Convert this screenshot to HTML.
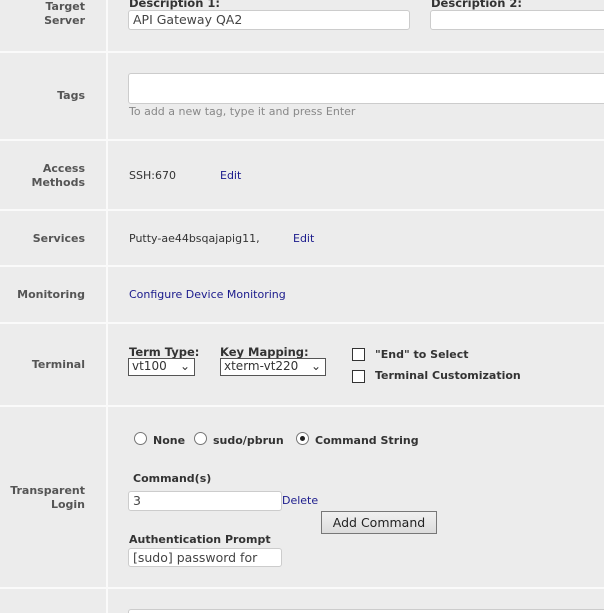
<!DOCTYPE html><html><head><style>
html,body{overflow:hidden}
body{margin:0;width:604px;height:613px;background:#ececec;position:relative;font-family:"DejaVu Sans","Liberation Sans",sans-serif;font-size:11px;color:#333}
.a{position:absolute;white-space:nowrap}
.h{position:absolute;left:0;width:604px;height:2px;background:#fafafa}
.v{position:absolute;left:106px;top:0;width:2px;height:613px;background:#fafafa}
.l{position:absolute;right:519px;text-align:right;font-weight:bold;color:#555;font-size:11px;line-height:14px}
.b{font-weight:bold;color:#333}
.lk{color:#1a1a8c}
.in{position:absolute;background:#fff;border:1px solid #ccc;border-radius:3px;box-sizing:border-box;font-size:12.5px;color:#444;padding-left:4px;font-family:"DejaVu Sans",sans-serif}
.sel{position:absolute;background:#fff;border:1px solid #555;box-sizing:border-box;font-size:12px;padding-left:3px;line-height:15px}
.cb{position:absolute;width:11px;height:11px;border:1px solid #333;background:#fff}
.rd{position:absolute;width:11px;height:11px;border:1px solid #777;border-radius:50%;background:#fff}
</style></head><body>
<div class="v"></div>
<div class="h" style="top:51px"></div><div class="h" style="top:139px"></div><div class="h" style="top:209px"></div><div class="h" style="top:265px"></div><div class="h" style="top:322px"></div><div class="h" style="top:405px"></div><div class="h" style="top:587px"></div>

<div class="l" style="top:0">Target<br>Server</div>
<div class="a b" style="left:129px;top:-4px;font-size:11.5px">Description 1:</div>
<div class="a b" style="left:431px;top:-4px;font-size:11.5px">Description 2:</div>
<div class="in" style="left:128px;top:10px;width:282px;height:20px;line-height:18px">API Gateway QA2</div>
<div class="in" style="left:430px;top:10px;width:190px;height:20px"></div>

<div class="l" style="top:89px">Tags</div>
<div class="in" style="left:128px;top:73px;width:490px;height:31px"></div>
<div class="a" style="left:129px;top:105px;color:#888">To add a new tag, type it and press Enter</div>

<div class="l" style="top:162px">Access<br>Methods</div>
<div class="a" style="left:129px;top:169px">SSH:670</div>
<div class="a lk" style="left:220px;top:169px">Edit</div>

<div class="l" style="top:232px">Services</div>
<div class="a" style="left:129px;top:232px">Putty-ae44bsqajapig11,</div>
<div class="a lk" style="left:293px;top:232px">Edit</div>

<div class="l" style="top:288px">Monitoring</div>
<div class="a lk" style="left:129px;top:288px">Configure Device Monitoring</div>

<div class="l" style="top:358px">Terminal</div>
<div class="a b" style="left:129px;top:345px;font-size:11.5px">Term Type:</div>
<div class="a b" style="left:220px;top:345px;font-size:11.5px">Key Mapping:</div>
<div class="sel" style="left:128px;top:358px;width:67px;height:18px">vt100<span style="position:absolute;right:4px;top:0">&#8964;</span></div>
<div class="sel" style="left:220px;top:358px;width:106px;height:18px">xterm-vt220<span style="position:absolute;right:4px;top:0">&#8964;</span></div>
<div class="cb" style="left:352px;top:348px"></div>
<div class="cb" style="left:352px;top:370px"></div>
<div class="a b" style="left:375px;top:348px">"End" to Select</div>
<div class="a b" style="left:375px;top:369px">Terminal Customization</div>

<div class="l" style="top:484px">Transparent<br>Login</div>
<div class="rd" style="left:134px;top:432px"></div>
<div class="a b" style="left:153px;top:434px">None</div>
<div class="rd" style="left:194px;top:432px"></div>
<div class="a b" style="left:213px;top:434px">sudo/pbrun</div>
<div class="rd" style="left:296px;top:432px"><div style="width:5px;height:5px;border-radius:50%;background:#222;margin:3px"></div></div>
<div class="a b" style="left:315px;top:434px">Command String</div>
<div class="a b" style="left:133px;top:472px">Command(s)</div>
<div class="in" style="left:128px;top:491px;width:154px;height:20px;line-height:18px">3</div>
<div class="a lk" style="left:282px;top:494px">Delete</div>
<div class="a" style="left:321px;top:511px;width:114px;height:21px;border:1px solid #777;background:linear-gradient(#f0f0f0,#dcdcdc);text-align:center;line-height:21px;font-size:12.5px;color:#222">Add Command</div>
<div class="a b" style="left:129px;top:533px">Authentication Prompt</div>
<div class="in" style="left:128px;top:548px;width:154px;height:19px;line-height:17px">[sudo] password for</div>
<div class="in" style="left:128px;top:609px;width:490px;height:20px"></div>
</body></html>
